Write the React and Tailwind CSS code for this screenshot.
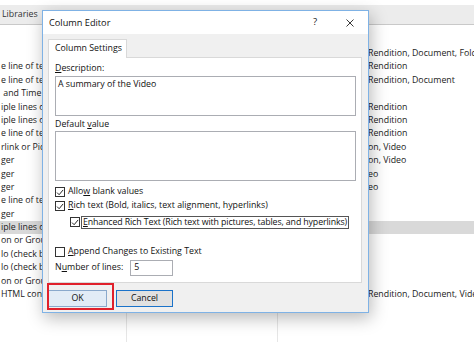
import React from 'react';

const rows = [
  ['', 'Rendition, Document, Folder'],
  ['e line of text', 'Rendition'],
  ['e line of text', 'Rendition, Document'],
  [' and Time', ''],
  ['iple lines of text', 'Rendition'],
  ['iple lines of text', 'Rendition'],
  ['e line of text', 'Rendition'],
  ['rlink or Picture', 'on, Video'],
  ['ger', 'on, Video'],
  ['ger', 'eo'],
  ['ger', 'eo'],
  ['e line of text', ''],
  ['ger', ''],
  ['iple lines of text', ''],
  ['on or Group', ''],
  ['lo (check box)', ''],
  ['lo (check box)', ''],
  ['on or Group', ''],
  ['HTML content', 'Rendition, Document, Video'],
];

const CheckBox = ({ checked }) => (
  <span className="w-[10px] h-[10px] border border-[#333] bg-white flex items-center justify-center shrink-0">
    {checked && (
      <svg width="9" height="9" viewBox="0 0 9 9">
        <path d="M1.2 4.6 L3.5 7 L8 1.6" fill="none" stroke="#222" strokeWidth="1.1" />
      </svg>
    )}
  </span>
);

const App = () => {
  return (
    <div
      className="relative w-[474px] h-[342px] overflow-hidden bg-white text-[#222] text-[8.8px]"
      style={{ fontFamily: '"Open Sans", "Noto Sans", sans-serif' }}
    >
      {/* background list page */}
      <div className="h-[5px] bg-white" />
      <div className="h-[20px] bg-[#ececec] border-b border-[#c9c9c9] flex items-center pl-[2px]">
        <span className="text-[#333]">Libraries</span>
      </div>
      <div className="flex h-[317px]">
        <div className="w-[127px] shrink-0 border-r border-[#e6e6e6] pt-[22px]">
          {rows.map((r, i) => (
            <div
              key={i}
              className={`h-[13.4px] leading-[13.4px] whitespace-pre pl-[1px] ${i === 13 ? 'bg-[#d9d9d9]' : ''}`}
            >
              {r[0]}
            </div>
          ))}
        </div>
        <div className="w-[151px] shrink-0 border-r border-[#e6e6e6] pt-[22px]">
          {rows.map((r, i) => (
            <div key={i} className={`h-[13.4px] ${i === 13 ? 'bg-[#d9d9d9]' : ''}`} />
          ))}
        </div>
        <div className="flex-1 min-w-0 overflow-hidden pt-[22px]">
          {rows.map((r, i) => (
            <div
              key={i}
              className={`h-[13.4px] leading-[13.4px] whitespace-nowrap pl-[90px] ${i === 13 ? 'bg-[#d9d9d9]' : ''}`}
            >
              {r[1]}
            </div>
          ))}
        </div>
      </div>

      {/* dialog window */}
      <div className="absolute left-[42px] top-[10px] w-[327px] h-[303px] border border-[#7fb2e5] bg-[#f0f0f0] flex flex-col shadow-[2px_5px_16px_rgba(0,0,0,0.28)] text-[#111]">
        <div className="h-[23px] bg-white flex items-center pl-[6px] pr-[14px]">
          <span className="text-[9.2px] flex-1">Column Editor</span>
          <span className="text-[9.5px] mr-[29px]">?</span>
          <svg width="8" height="8" viewBox="0 0 8 8">
            <path d="M0.5 0.5 L7.5 7.5 M7.5 0.5 L0.5 7.5" stroke="#222" strokeWidth="0.9" fill="none" />
          </svg>
        </div>

        <div className="flex-1 pt-[5px] pl-[5px] pr-[6px] flex flex-col">
          <div className="w-[79px] h-[19px] bg-white border border-b-0 border-[#d9d9d9] flex items-center pl-[6px] relative z-10">
            Column Settings
          </div>
          <div className="h-[226px] bg-white border border-[#d9d9d9] -mt-px pl-[6px] pr-[5px] pt-[3px] flex flex-col">
            <div className="h-[14px] leading-[14px]">
              <u>D</u>escription:
            </div>
            <div className="mt-[1px] h-[40px] border border-[#abadb3] px-[2px] pt-[1px] leading-[12px]">
              A summary of the Video
            </div>
            <div className="h-[14px] leading-[14px] mt-px">
              Default <u>v</u>alue
            </div>
            <div className="h-[50px] border border-[#abadb3]" />

            <div className="mt-[4px] h-[14px] flex items-center gap-[3px]">
              <CheckBox checked />
              <span>Allo<u>w</u> blank values</span>
            </div>
            <div className="h-[14px] flex items-center gap-[3px]">
              <CheckBox checked />
              <span><u>R</u>ich text (Bold, italics, text alignment, hyperlinks)</span>
            </div>
            <div className="mt-[2px] h-[14px] flex items-center pl-[15px]">
              <CheckBox checked />
              <span className="ml-px border border-[#555] px-px leading-[11px] whitespace-nowrap tracking-[-0.12px]">
                <u>E</u>nhanced Rich Text (Rich text with pictures, tables, and hyperlinks)
              </span>
            </div>

            <div className="mt-[16px] h-[14px] flex items-center gap-[3px]">
              <CheckBox />
              <span><u>A</u>ppend Changes to Existing Text</span>
            </div>
            <div className="mt-[1px] flex items-center gap-[7px]">
              <span className="whitespace-nowrap">N<u>u</u>mber of lines:</span>
              <div className="w-[43px] h-[16px] border border-[#abadb3] flex items-center pl-[3px]">5</div>
            </div>
          </div>

          <div className="mt-[7px] flex gap-[9px]">
            <div className="w-[59px] h-[17px] bg-[#e2ecf6] border border-[#8aa9cc] flex items-center justify-center">
              OK
            </div>
            <div className="w-[57px] h-[17px] bg-[#e1e1e1] border-[1.5px] border-[#1a72c9] flex items-center justify-center">
              Cancel
            </div>
          </div>
        </div>

        {/* red annotation box */}
        <div className="absolute left-[4px] top-[272px] w-[67px] h-[27px] border-2 border-[#e0202b]" />
      </div>
    </div>
  );
};

export default App;
